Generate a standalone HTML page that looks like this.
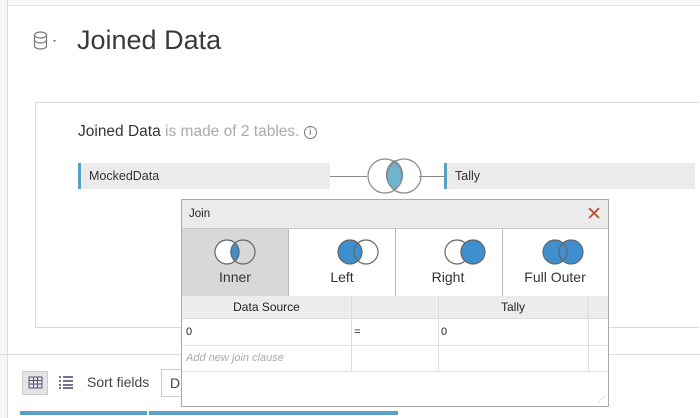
<!DOCTYPE html><html><head><style>
*{margin:0;padding:0;box-sizing:border-box}
body{width:700px;height:418px;background:#fff;position:relative;overflow:hidden;font-family:"Liberation Sans",sans-serif;color:#333}
.a{position:absolute}
</style></head><body>
<div class="a" style="left:0;top:0;width:8px;height:418px;background:#f6f6f6;border-right:1px solid #ddd"></div>
<div class="a" style="left:8px;top:0;width:692px;height:6px;background:#f8f8f8;border-bottom:1px solid #e6e6e6"></div>
<svg class="a" style="left:32px;top:30px" width="30" height="22" viewBox="0 0 30 22"><ellipse cx="8.5" cy="5" rx="6" ry="3" fill="none" stroke="#777" stroke-width="1.2"/><path d="M2.5 5v11c0 1.6 2.7 3 6 3s6-1.4 6-3V5" fill="none" stroke="#777" stroke-width="1.2"/><path d="M2.5 10c0 1.6 2.7 3 6 3s6-1.4 6-3" fill="none" stroke="#777" stroke-width="1.2"/><path d="M21 10h3l-1.5 2z" fill="#666"/></svg>
<div class="a" style="left:77px;top:25px;font-size:27px;color:#3a3a3a">Joined Data</div>
<div class="a" style="left:35px;top:102px;width:664px;height:226px;border:1px solid #d8d8d8;border-right:none"></div>
<div class="a" style="left:0;top:354px;width:700px;height:1px;background:#ddd"></div>
<div class="a" style="left:78px;top:123px;font-size:15.5px;color:#333">Joined Data <span style="color:#aaa">is made of 2 tables.</span> <span style="display:inline-block;width:13px;height:13px;border:1.3px solid #777;border-radius:50%;font-size:10px;text-align:center;line-height:11px;color:#666;vertical-align:1px">i</span></div>
<div class="a" style="left:78px;top:163px;width:252px;height:26px;background:#ebebeb;border-left:3px solid #5aa0c4;font-size:12.5px;line-height:26px;padding-left:8px">MockedData</div>
<div class="a" style="left:330px;top:176px;width:37px;height:1px;background:#888"></div>
<div class="a" style="left:419px;top:176px;width:25px;height:1px;background:#888"></div>
<svg class="a" style="left:364px;top:157px" width="60" height="38"><path d="M30.5 3.5 A17 17 0 0 1 30.5 32.5 A17 17 0 0 1 30.5 3.5z" fill="#6fb3cf" stroke="#888"/><circle cx="21" cy="19" r="17" fill="none" stroke="#888" stroke-width="1.2"/><circle cx="40" cy="19" r="17" fill="none" stroke="#888" stroke-width="1.2"/></svg>
<div class="a" style="left:444px;top:163px;width:251px;height:26px;background:#ebebeb;border-left:3px solid #5aa0c4;font-size:12.5px;line-height:26px;padding-left:8px">Tally</div>
<div class="a" style="left:22px;top:371px;width:26px;height:24px;background:#e4e4e4;border:1px solid #ccc"></div>
<svg class="a" style="left:28px;top:376px" width="15" height="13"><g stroke="#557" stroke-width="1" fill="none"><rect x="1" y="1" width="13" height="11"/><path d="M1 4.5h13M1 8h13M5.5 1v11M9.5 1v11"/></g></svg>
<svg class="a" style="left:58px;top:375px" width="16" height="14"><g stroke="#446" stroke-width="1.6"><path d="M1 2h2M5 2h10M1 6h2M5 6h10M1 10h2M5 10h10M1 13h2M5 13h10"/></g></svg>
<div class="a" style="left:87px;top:374px;font-size:14px;color:#444">Sort fields</div>
<div class="a" style="left:161px;top:369px;width:30px;height:28px;border:1px solid #ccc;font-size:14px;padding:5px 0 0 8px;color:#444">D</div>
<div class="a" style="left:20px;top:411px;width:127px;height:4px;background:#5aa0c4"></div>
<div class="a" style="left:149px;top:411px;width:249px;height:4px;background:#5aa0c4"></div>
<div class="a" style="left:181px;top:199px;width:428px;height:208px;background:#fff;border:1px solid #aaa">
 <div class="a" style="left:0;top:0;width:426px;height:29px;background:#ebebeb;border-bottom:1px solid #c8c8c8;font-size:11.5px;line-height:29px;padding-left:7px;color:#222">Join<span style="position:absolute;right:6px;top:0;color:#c0503a;font-size:19px">✕</span></div>
 <div class="a" style="left:0;top:29px;width:107px;height:67px;background:#d8d8d8"></div>
 <div class="a" style="left:106px;top:29px;width:1px;height:67px;background:#bbb"></div>
 <div class="a" style="left:213px;top:29px;width:1px;height:67px;background:#bbb"></div>
 <div class="a" style="left:320px;top:29px;width:1px;height:67px;background:#bbb"></div>
 <svg class="a" style="left:0;top:29px" width="426" height="67">
  <g stroke="#666" stroke-width="1.2">
   <circle cx="45" cy="23" r="12" fill="#fff"/><circle cx="61" cy="23" r="12" fill="none"/>
   <path d="M53 14 A12 12 0 0 1 53 32 A12 12 0 0 1 53 14z" fill="#3d8fcf"/>
   <circle cx="168" cy="23" r="12" fill="#3d8fcf"/><circle cx="184" cy="23" r="12" fill="none"/>
   <circle cx="275" cy="23" r="12" fill="none"/><circle cx="291" cy="23" r="12" fill="#3d8fcf"/><path d="M283 14 A12 12 0 0 0 283 32" fill="none"/>
   <circle cx="373" cy="23" r="12" fill="#3d8fcf"/><circle cx="389" cy="23" r="12" fill="#3d8fcf"/><path d="M381 14 A12 12 0 0 1 381 32 M381 14 A12 12 0 0 0 381 32" fill="none"/>
  </g>
  <g font-family="Liberation Sans" font-size="14" fill="#333" text-anchor="middle">
   <text x="53" y="53">Inner</text><text x="160" y="53">Left</text><text x="266" y="53">Right</text><text x="373" y="53">Full Outer</text>
  </g>
 </svg>
 <div class="a" style="left:0;top:96px;width:426px;height:23px;background:#ececec;border-bottom:1px solid #ddd"></div>
 <div class="a" style="left:0;top:96px;width:169px;text-align:center;font-size:12px;line-height:23px;color:#222">Data Source</div>
 <div class="a" style="left:256px;top:96px;width:150px;text-align:center;font-size:12px;line-height:23px;color:#222">Tally</div>
 <div class="a" style="left:169px;top:96px;width:1px;height:76px;background:#ddd"></div>
 <div class="a" style="left:256px;top:96px;width:1px;height:76px;background:#ddd"></div>
 <div class="a" style="left:406px;top:96px;width:1px;height:76px;background:#ddd"></div>
 <div class="a" style="left:0;top:145px;width:426px;height:1px;background:#e2e2e2"></div>
 <div class="a" style="left:0;top:171px;width:426px;height:1px;background:#e2e2e2"></div>
 <div class="a" style="left:4px;top:126px;font-size:11px;color:#222">0</div>
 <div class="a" style="left:172px;top:126px;font-size:11px;color:#222">=</div>
 <div class="a" style="left:259px;top:126px;font-size:11px;color:#222">0</div>
 <div class="a" style="left:4px;top:152px;font-size:11px;color:#aaa;font-style:italic">Add new join clause</div>
 <div class="a" style="right:3px;bottom:2px;font-size:7px;color:#999">⋰</div>
</div>
</body></html>
